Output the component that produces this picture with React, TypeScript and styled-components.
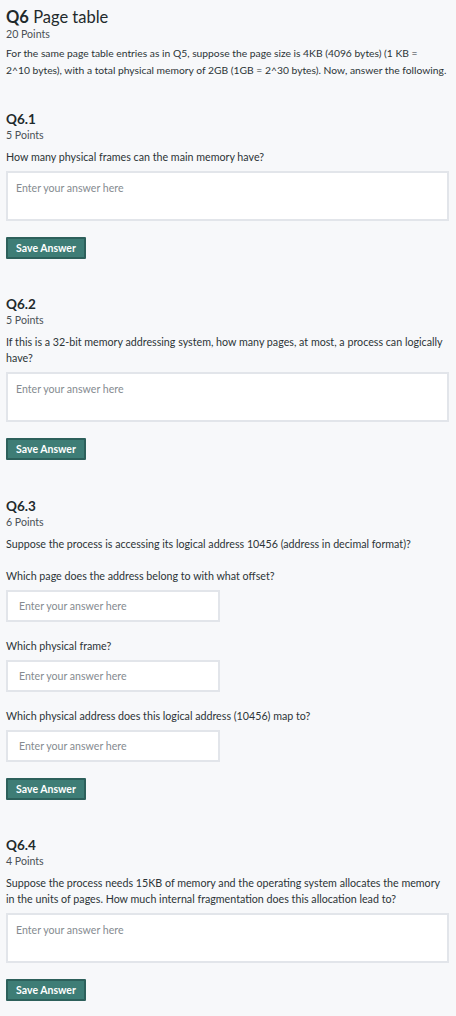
import React from 'react';
import styled, { createGlobalStyle } from 'styled-components';

const GlobalStyle = createGlobalStyle`
  html, body {
    margin: 0;
    padding: 0;
    background: #f7f8fa;
  }
  body {
    font-family: Lato, 'Noto Sans', sans-serif;
    color: #2c3437;
  }
`;

const Page = styled.div`
  padding: 8px 7px 20px 6px;
  background: #f7f8fa;
  min-height: 1016px;
  box-sizing: border-box;
`;

const Title = styled.h1`
  margin: 0;
  font-size: 16.5px;
  line-height: 18px;
  font-weight: 400;
  color: #1f2a2c;
  b {
    font-weight: 700;
  }
`;

const Points = styled.div`
  font-size: 10.6px;
  line-height: 12px;
  color: #4a5156;
  margin-top: 2px;
`;

const Intro = styled.p`
  margin: 5px 0 0;
  font-size: 10.3px;
  line-height: 17px;
`;

const Question = styled.section<{ $gap?: number }>`
  margin-top: ${(p) => p.$gap ?? 37}px;
`;

const QHeading = styled.h2`
  margin: 0;
  font-size: 13.5px;
  line-height: 16px;
  font-weight: 700;
  color: #1f2a2c;
`;

const Prompt = styled.p<{ $gap?: number }>`
  margin: ${(p) => p.$gap ?? 8}px 0 0;
  font-size: 10.7px;
  line-height: 16px;
`;

const TextArea = styled.textarea`
  display: block;
  box-sizing: border-box;
  width: 100%;
  height: 50px;
  margin-top: 6px;
  padding: 8px 8px;
  border: 2px solid #e2e5ea;
  border-radius: 0;
  background: #fff;
  resize: none;
  font-family: inherit;
  font-size: 10.6px;
  line-height: 14px;
  color: #2c3437;
  &::placeholder {
    color: #858b90;
  }
`;

const Input = styled.input`
  display: block;
  box-sizing: border-box;
  width: 214px;
  height: 32px;
  margin-top: 6px;
  padding: 0 11px;
  border: 2px solid #e2e5ea;
  border-radius: 0;
  background: #fff;
  font-family: inherit;
  font-size: 10.6px;
  color: #2c3437;
  &::placeholder {
    color: #858b90;
  }
`;

const SaveButton = styled.button`
  display: block;
  box-sizing: border-box;
  width: 80px;
  height: 22px;
  margin-top: 16px;
  padding: 0;
  border: 2px solid #2d605b;
  border-radius: 1px;
  background: #3e7d76;
  color: #fff;
  font-family: inherit;
  font-size: 10.5px;
  font-weight: 700;
  cursor: pointer;
`;

const introText =
  'For the same page table entries as in Q5, suppose the page size is 4KB (4096 bytes) (1 KB = 2^10\u00a0bytes), with a total physical memory of 2GB (1GB = 2^30 bytes). Now, answer the following.';

const questions = [
  {
    id: 'Q6.1',
    points: '5 Points',
    prompt: 'How many physical frames can the main memory have?',
    gap: 32,
  },
  {
    id: 'Q6.2',
    points: '5 Points',
    prompt:
      'If this is a 32-bit memory addressing system, how many pages, at most, a process can logically have?',
    gap: 37,
  },
];

const subParts = [
  'Which page does the address belong to with what offset?',
  'Which physical frame?',
  'Which physical address does this logical address (10456) map to?',
];

export default function App() {
  return (
    <Page>
      <GlobalStyle />
      <Title>
        <b>Q6</b> Page table
      </Title>
      <Points>20 Points</Points>
      <Intro>{introText}</Intro>

      {questions.map((q) => (
        <Question key={q.id} $gap={q.gap}>
          <QHeading>{q.id}</QHeading>
          <Points>{q.points}</Points>
          <Prompt>{q.prompt}</Prompt>
          <TextArea placeholder="Enter your answer here" />
          <SaveButton>Save Answer</SaveButton>
        </Question>
      ))}

      <Question $gap={38}>
        <QHeading>Q6.3</QHeading>
        <Points>6 Points</Points>
        <Prompt>
          Suppose the process is accessing its logical address 10456 (address in
          decimal format)?
        </Prompt>
        {subParts.map((s) => (
          <div key={s}>
            <Prompt $gap={16}>{s}</Prompt>
            <Input placeholder="Enter your answer here" />
          </div>
        ))}
        <SaveButton>Save Answer</SaveButton>
      </Question>

      <Question $gap={37}>
        <QHeading>Q6.4</QHeading>
        <Points>4 Points</Points>
        <Prompt>
          Suppose the process needs 15KB of memory and the operating system
          allocates the memory in the units of pages. How much internal
          fragmentation does this allocation lead to?
        </Prompt>
        <TextArea placeholder="Enter your answer here" />
        <SaveButton>Save Answer</SaveButton>
      </Question>
    </Page>
  );
}
